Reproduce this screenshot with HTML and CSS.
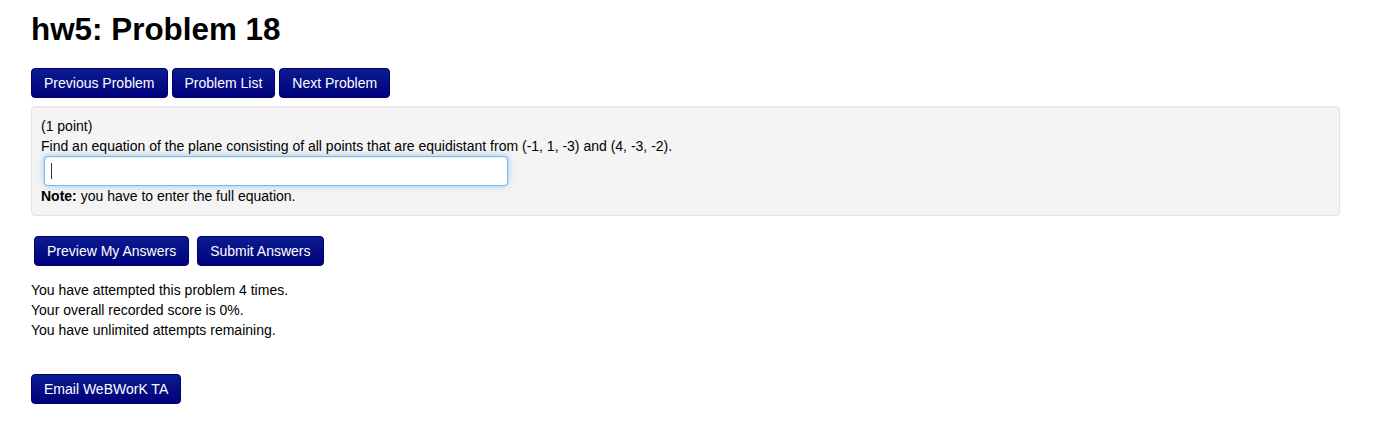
FILE: index.html
```html
<!DOCTYPE html>
<html>
<head>
<meta charset="utf-8">
<title>hw5: Problem 18</title>
<link rel="stylesheet" href="styles.css">
</head>
<body>
<div class="page">
  <h1 class="title">hw5: Problem 18</h1>
  <div class="nav">
    <a class="btn">Previous Problem</a>
    <a class="btn">Problem List</a>
    <a class="btn">Next Problem</a>
  </div>
  <div class="well">
    <div class="line">(1 point)</div>
    <div class="line">Find an equation of the plane consisting of all points that are equidistant from (-1, 1, -3) and (4, -3, -2).</div>
    <div class="answer-row">
      <span class="answer-wrap"><input class="answer" type="text" value=""><span class="caret"></span></span>
    </div>
    <div class="line"><b>Note:</b> you have to enter the full equation.</div>
  </div>
  <div class="submit-row">
    <button class="btn">Preview My Answers</button>
    <button class="btn">Submit Answers</button>
  </div>
  <div class="status">
    <div class="line">You have attempted this problem 4 times.</div>
    <div class="line">Your overall recorded score is 0%.</div>
    <div class="line">You have unlimited attempts remaining.</div>
  </div>
  <div class="email-row">
    <a class="btn">Email WeBWorK TA</a>
  </div>
</div>
</body>
</html>
```
FILE: styles.css
```css
html, body {
  margin: 0;
  padding: 0;
  background: #ffffff;
}
body {
  font-family: "Liberation Sans", Arial, sans-serif;
  font-size: 14px;
  line-height: 20px;
  color: #000000;
}
.page {
  padding: 0 34px 0 31px;
}
.title {
  margin: 0;
  padding-top: 12px;
  padding-left: 0;
  font-size: 31.4px;
  line-height: 36px;
  font-weight: bold;
}
.nav {
  display: flex;
  gap: 4px;
  margin-top: 20px;
}
.btn {
  display: inline-block;
  box-sizing: border-box;
  height: 30px;
  padding: 4px 12px;
  font-family: "Liberation Sans", Arial, sans-serif;
  font-size: 14px;
  line-height: 20px;
  color: #ffffff;
  text-decoration: none;
  background-color: #000080;
  background-image: linear-gradient(to bottom, #0c1c90, #00007c);
  border: 1px solid #00006a;
  border-radius: 4px;
  cursor: pointer;
}
.well {
  margin-top: 8px;
  background: #f4f4f4;
  border: 1px solid #e3e3e3;
  border-radius: 4px;
  padding: 9px 9px 9px 9px;
  box-shadow: inset 0 1px 1px rgba(0,0,0,0.03);
}
.line {
  white-space: nowrap;
}
.answer-row {
  height: 30px;
  padding-left: 3px;
}
.answer-wrap {
  position: relative;
  display: inline-block;
}
.answer {
  display: block;
  box-sizing: border-box;
  width: 464px;
  height: 30px;
  margin: 0;
  padding: 4px 6px;
  font-family: "Liberation Sans", Arial, sans-serif;
  font-size: 14px;
  border: 1px solid rgba(82, 168, 236, 0.8);
  border-radius: 4px;
  background: #ffffff;
  outline: none;
  box-shadow: inset 0 1px 1px rgba(0,0,0,0.075), 0 0 6px rgba(82,168,236,0.6);
}
.caret {
  position: absolute;
  left: 7px;
  top: 7px;
  width: 1px;
  height: 16px;
  background: #333333;
}
.submit-row {
  display: flex;
  gap: 8px;
  margin-top: 20px;
  padding-left: 3px;
}
.status {
  margin-top: 14px;
}
.email-row {
  margin-top: 34px;
  display: flex;
}
```
